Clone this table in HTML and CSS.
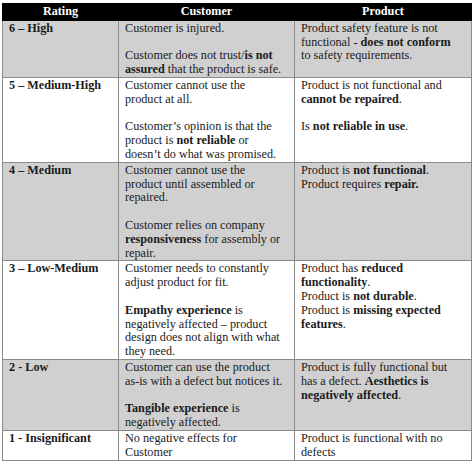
FILE: index.html
```html
<!DOCTYPE html>
<html>
<head>
<meta charset="utf-8">
<link rel="stylesheet" href="styles.css">
</head>
<body>
<table class="rating-table">
  <colgroup>
    <col class="col-rating">
    <col class="col-customer">
    <col class="col-product">
  </colgroup>
  <thead>
    <tr class="head-row">
      <th>Rating</th>
      <th>Customer</th>
      <th>Product</th>
    </tr>
  </thead>
  <tbody>
    <tr class="shaded">
      <td class="rating">6 – High</td>
      <td>
        <p>Customer is injured.</p>
        <p class="gap">Customer does not trust/<b>is not</b><br><b>assured</b> that the product is safe.</p>
      </td>
      <td>
        <p>Product safety feature is not<br>functional - <b>does not conform</b><br>to safety requirements.</p>
      </td>
    </tr>
    <tr>
      <td class="rating">5 – Medium-High</td>
      <td>
        <p>Customer cannot use the<br>product at all.</p>
        <p class="gap">Customer’s opinion is that the<br>product is <b>not reliable</b> or<br>doesn’t do what was promised.</p>
      </td>
      <td>
        <p>Product is not functional and<br><b>cannot be repaired</b>.</p>
        <p class="gap">Is <b>not reliable in use</b>.</p>
      </td>
    </tr>
    <tr class="shaded">
      <td class="rating">4 – Medium</td>
      <td>
        <p>Customer cannot use the<br>product until assembled or<br>repaired.</p>
        <p class="gap">Customer relies on company<br><b>responsiveness</b> for assembly or<br>repair.</p>
      </td>
      <td>
        <p>Product is <b>not functional</b>.<br>Product requires <b>repair.</b></p>
      </td>
    </tr>
    <tr>
      <td class="rating">3 – Low-Medium</td>
      <td>
        <p>Customer needs to constantly<br>adjust product for fit.</p>
        <p class="gap"><b>Empathy experience</b> is<br>negatively affected – product<br>design does not align with what<br>they need.</p>
      </td>
      <td>
        <p>Product has <b>reduced</b><br><b>functionality</b>.<br>Product is <b>not durable</b>.<br>Product is <b>missing expected</b><br><b>features</b>.</p>
      </td>
    </tr>
    <tr class="shaded">
      <td class="rating">2 - Low</td>
      <td>
        <p>Customer can use the product<br>as-is with a defect but notices it.</p>
        <p class="gap"><b>Tangible experience</b> is<br>negatively affected.</p>
      </td>
      <td>
        <p>Product is fully functional but<br>has a defect. <b>Aesthetics is</b><br><b>negatively affected</b>.</p>
      </td>
    </tr>
    <tr>
      <td class="rating">1 - Insignificant</td>
      <td>
        <p>No negative effects for<br>Customer</p>
      </td>
      <td>
        <p>Product is functional with no<br>defects</p>
      </td>
    </tr>
  </tbody>
</table>
</body>
</html>
```
FILE: styles.css
```css
html, body {
  margin: 0;
  padding: 0;
  background: #ffffff;
}
body {
  padding: 3px 0 0 2px;
  font-family: "Liberation Serif", "Times New Roman", serif;
  font-size: 12.2px;
  line-height: 13.8px;
  color: #1a1a1a;
}
.rating-table {
  border-collapse: collapse;
  table-layout: fixed;
  width: 469px;
}
.col-rating { width: 116px; }
.col-customer { width: 176px; }
.col-product { width: 177px; }
.head-row th {
  background: #000000;
  color: #ffffff;
  font-weight: bold;
  text-align: center;
  padding: 1px 0 1px 0;
  border: 1px solid #000000;
  line-height: 13.8px;
}
.rating-table td {
  border: 1px solid #8a8a8a;
  vertical-align: top;
  padding: 1px 3px 0 6px;
  white-space: nowrap;
}
.rating-table td.rating {
  font-weight: bold;
}
.shaded td {
  background: #d0d0d0;
}
.rating-table p {
  margin: 0;
}
.rating-table p.gap {
  margin-top: 13.8px;
}
b {
  font-weight: bold;
}
```
